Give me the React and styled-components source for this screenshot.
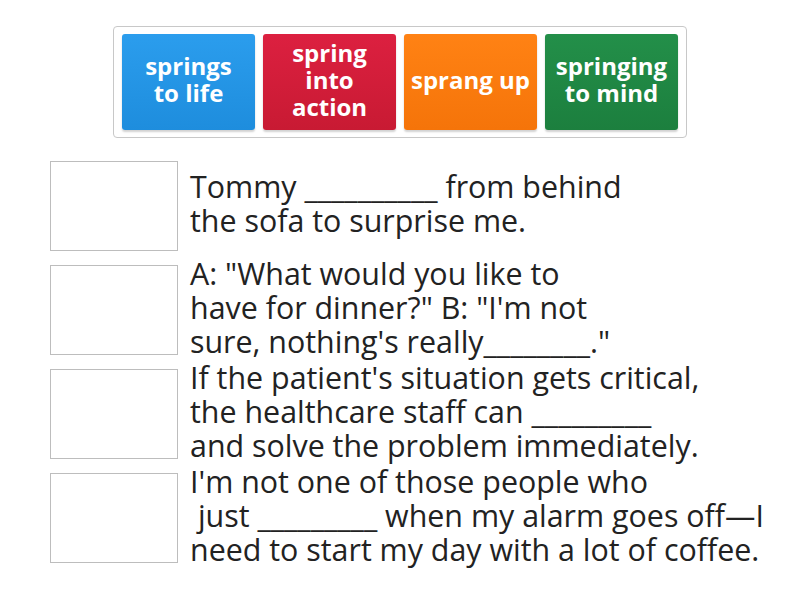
import React from "react";
import styled, { createGlobalStyle } from "styled-components";

const GlobalStyle = createGlobalStyle`
  body {
    margin: 0;
    background: #fff;
    font-family: "Open Sans", "Liberation Sans", sans-serif;
  }
`;

const tiles = [
  { label: "springs\nto life", from: "#2b9ded", to: "#1e8ddd" },
  { label: "spring\ninto\naction", from: "#dc2040", to: "#c81a33" },
  { label: "sprang up", from: "#ff8214", to: "#f57409" },
  { label: "springing\nto mind", from: "#238f49", to: "#1c7f3e" },
];

const items = [
  ["Tommy __________ from behind", "the sofa to surprise me."],
  [
    'A: "What would you like to',
    'have for dinner?" B: "I\'m not',
    "sure, nothing's really________.\"",
  ],
  [
    "If the patient's situation gets critical,",
    "the healthcare staff can _________",
    "and solve the problem immediately.",
  ],
  [
    "I'm not one of those people who",
    " just _________ when my alarm goes off\u2014I",
    "need to start my day with a lot of coffee.",
  ],
];

function App() {
  return (
    <Page>
      <GlobalStyle />
      <Tray>
        {tiles.map((t) => (
          <Tile key={t.label} from={t.from} to={t.to}>
            {t.label}
          </Tile>
        ))}
      </Tray>
      <List>
        {items.map((lines, i) => (
          <Row key={i}>
            <DropBox />
            <Prompt>
              {lines.map((l, j) => (
                <Line key={j}>{l}</Line>
              ))}
            </Prompt>
          </Row>
        ))}
      </List>
    </Page>
  );
}

const Page = styled.div`
  width: 800px;
  height: 600px;
  padding-top: 26px;
  box-sizing: border-box;
`;

const Tray = styled.div`
  width: 574px;
  margin: 0 auto;
  box-sizing: border-box;
  border: 1px solid #c8c8c8;
  border-radius: 4px;
  padding: 7px 8px 7px 8px;
  display: flex;
  gap: 8px;
`;

const Tile = styled.div`
  width: 133px;
  height: 96px;
  border-radius: 3px;
  background: linear-gradient(${(p) => p.from}, ${(p) => p.to});
  box-shadow: 0 2px 2px rgba(0, 0, 0, 0.18);
  display: flex;
  align-items: center;
  justify-content: center;
  text-align: center;
  white-space: pre-line;
  color: #fff;
  font-weight: 700;
  font-size: 24px;
  line-height: 27px;
  padding-bottom: 6px;
  box-sizing: border-box;
`;

const List = styled.div`
  margin-top: 16px;
  padding-left: 50px;
  display: flex;
  flex-direction: column;
`;

const Row = styled.div`
  height: 104px;
  display: flex;
  align-items: center;
  gap: 12px;
`;

const DropBox = styled.div`
  width: 128px;
  height: 90px;
  box-sizing: border-box;
  border: 1px solid #bdbdbd;
  flex-shrink: 0;
`;

const Prompt = styled.div`
  color: #222;
  font-size: 30.4px;
  line-height: 34px;
  margin-top: -4px;
`;

const Line = styled.div`
  white-space: pre;
`;

export default App;
